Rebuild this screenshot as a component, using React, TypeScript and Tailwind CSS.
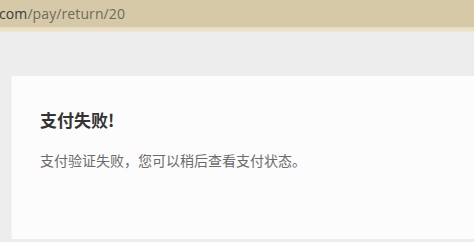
import React from 'react';

export default function App() {
  return (
    <div className="w-[474px] h-[242px] overflow-hidden bg-[#ededed] flex flex-col" style={{ fontFamily: '"Noto Sans", "Noto Sans CJK SC", sans-serif' }}>
      {/* Address bar */}
      <div className="h-[27px] shrink-0 bg-[#d6c9a7] flex items-center">
        <span className="-ml-[1px] text-[14px] leading-none tracking-[0.1px]" style={{ fontFamily: '"Open Sans", "Noto Sans", sans-serif' }}>
          <span className="text-[#3a3a3a]">com</span>
          <span className="text-[#6e6a60]">/pay/return/20</span>
        </span>
      </div>
      <div className="h-[5px] shrink-0 bg-gradient-to-b from-[#e6dbbd] to-[#efe6cf]" />

      {/* Page */}
      <div className="flex-1 pt-[44px] pl-[11px]">
        <div className="h-[163px] bg-[#fcfcfc] border-l border-[#f4f4f4] pl-[28px] pt-[32px]">
          <h1 className="text-[17px] leading-[24px] font-bold text-[#333]" style={{ fontFamily: '"Noto Sans CJK SC", sans-serif' }}>
            支付失败!
          </h1>
          <p className="mt-[18px] text-[14px] leading-[20px] text-[#6b6b6b]" style={{ fontFamily: '"Noto Sans CJK SC", sans-serif' }}>
            支付验证失败，您可以稍后查看支付状态。
          </p>
        </div>
      </div>
    </div>
  );
}
